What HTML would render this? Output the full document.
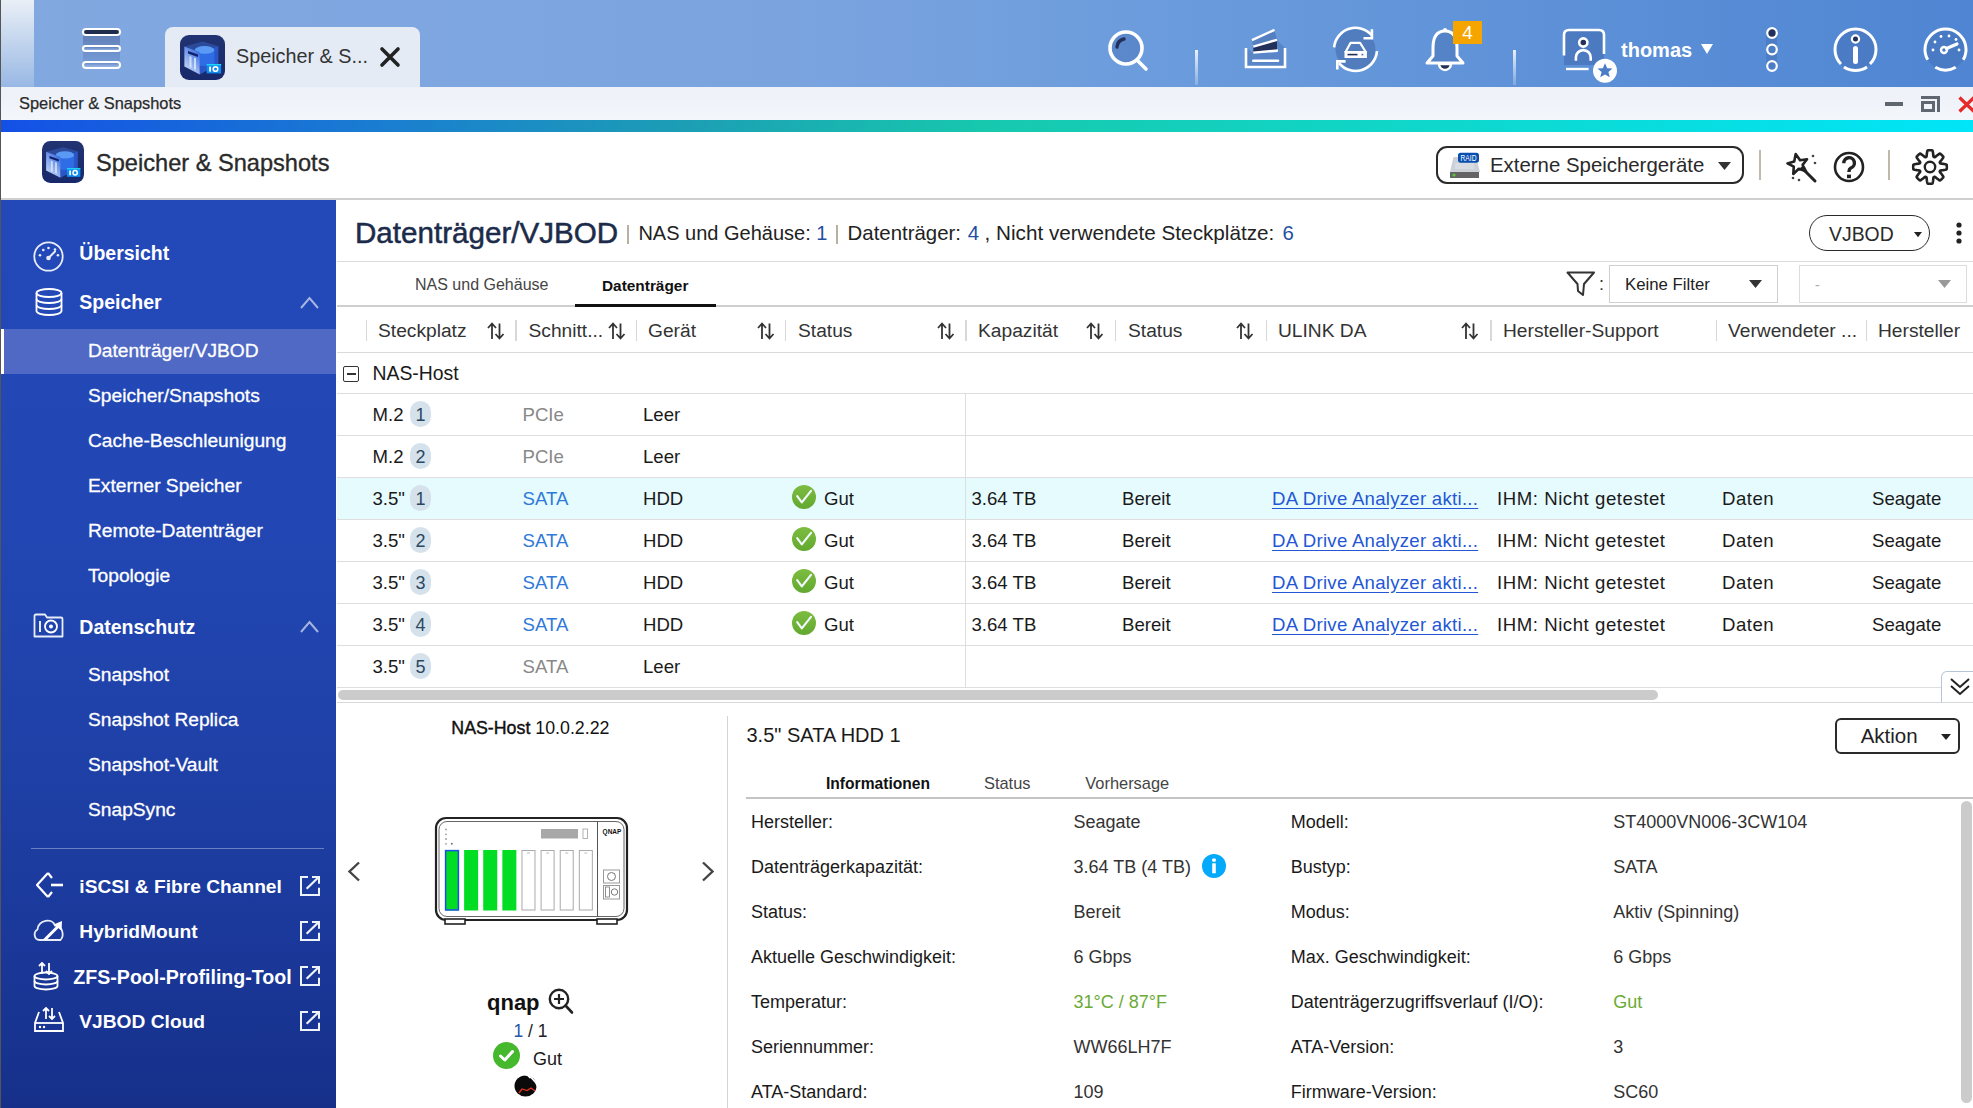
<!DOCTYPE html>
<html><head><meta charset="utf-8">
<style>
*{margin:0;padding:0;box-sizing:border-box}
html,body{width:1973px;height:1108px;overflow:hidden;background:#fff;font-family:"Liberation Sans",sans-serif;color:#222}
.a{position:absolute}
.t{position:absolute;white-space:nowrap;line-height:30px;height:30px}
svg{position:absolute;overflow:visible}
</style></head><body>

<div class="a" style="left:0px;top:0px;width:1973px;height:87px;background:linear-gradient(90deg,#82a8e0 0%,#7ba4df 40%,#6a9bdc 60%,#4f85d2 100%)"></div>
<div class="a" style="left:1px;top:0px;width:33px;height:87px;background:linear-gradient(180deg,#eaeff6 0%,#c9d9ef 40%,#98b8e4 100%)"></div>
<div class="a" style="left:83px;top:35px;width:37px;height:27px;background:linear-gradient(180deg,rgba(70,95,150,0.55),rgba(90,125,190,0.3))"></div>
<div class="a" style="left:82px;top:28px;width:39px;height:7.8px;border:2.4px solid #fff;border-radius:5px;background:#1e2d4d"></div>
<div class="a" style="left:82px;top:44.7px;width:39px;height:7.8px;border:2.4px solid #fff;border-radius:5px;background:linear-gradient(180deg,#5f80b8,#8fb0e2)"></div>
<div class="a" style="left:82px;top:61.4px;width:39px;height:7.8px;border:2.4px solid #fff;border-radius:5px;background:linear-gradient(180deg,#6a8cc8,#9ab8e8)"></div>
<div class="a" style="left:165px;top:27px;width:255px;height:60px;background:#e4ebf5;border-radius:8px 8px 0 0"></div>
<svg style="left:180px;top:35px" width="45" height="45" viewBox="0 0 45 45"><defs><linearGradient id="iga" x1="0" y1="0" x2="0" y2="1"><stop offset="0" stop-color="#223372"/><stop offset="1" stop-color="#17296a"/></linearGradient>
<linearGradient id="lfa" x1="0" y1="1" x2="0.6" y2="0"><stop offset="0" stop-color="#d8e6fa"/><stop offset="0.5" stop-color="#8fb0f0"/><stop offset="1" stop-color="#3f6fe0"/></linearGradient></defs>
<rect x="0" y="0" width="45" height="45" rx="9" fill="url(#iga)"/>
<path d="M4.4 11.5 L22.7 6.6 L38.4 11 L19.6 16.9 Z" fill="#2c4a9a"/>
<path d="M19.6 16.9 L38.4 11 L38.4 29.6 L19.8 39.4 Z" fill="#2a56c8"/>
<rect x="14.8" y="14.9" width="19.6" height="12.5" fill="#2f6de6"/>
<ellipse cx="24.6" cy="27.4" rx="9.8" ry="3.6" fill="#2f6de6"/>
<ellipse cx="24.6" cy="14.9" rx="9.8" ry="3.9" fill="#5a9af5"/>
<path d="M4.4 11.5 L19.6 16.9 L19.8 39.4 L4.4 31.5 Z" fill="url(#lfa)"/>
<path d="M8 16 L18 19.5 L18 22 L8 18.5 Z" fill="#10206a"/>
<path d="M9.5 21 L11.5 21.7 L11.5 33 L9.5 32 Z M14 22.5 L16 23.2 L16 35 L14 34 Z" fill="#eef4ff" opacity="0.7"/>
<rect x="26.7" y="29.1" width="14.4" height="9.3" fill="#0f8cf2"/>
<rect x="26.7" y="29.1" width="14.4" height="1.2" fill="#20e0f8"/>
<rect x="29.2" y="31.6" width="1.8" height="5" fill="#fff"/>
<circle cx="35.5" cy="34" r="2.3" fill="none" stroke="#fff" stroke-width="1.6"/></svg>
<div class="t" style="left:236px;top:40.84px;font-size:19.8px;color:#333;font-weight:normal;">Speicher &amp; S...</div>
<svg style="left:380px;top:47px" width="20" height="20" viewBox="0 0 20 20"><path d="M2 2 L18 18 M18 2 L2 18" stroke="#222" stroke-width="3.6" stroke-linecap="round"/></svg>
<svg style="left:1105px;top:27px" width="46" height="46" viewBox="0 0 46 46"><circle cx="21" cy="21" r="16" fill="rgba(60,100,170,0.35)" stroke="#fff" stroke-width="3.6"/><path d="M32 33 L41 42" stroke="#fff" stroke-width="3.6" stroke-linecap="round"/><path d="M12 20 A9 9 0 0 1 19 12" stroke="#22305a" stroke-width="3.4" fill="none" stroke-linecap="round"/></svg>
<div class="a" style="left:1195px;top:50px;width:3px;height:35px;background:linear-gradient(180deg,rgba(255,255,255,0.85),rgba(255,255,255,0.2))"></div>
<div class="a" style="left:1513px;top:50px;width:3px;height:35px;background:linear-gradient(180deg,rgba(255,255,255,0.85),rgba(255,255,255,0.2))"></div>
<svg style="left:1244px;top:28px" width="44" height="42" viewBox="0 0 44 42"><path d="M8 12.2 L30.5 1.9 L33 11.8 L9.3 18.6 Z" fill="rgba(40,70,130,0.3)"/><path d="M2 20 L2 39 L41 39 L41 20 L33 12 L33 25 L9.3 25 L2 20 Z" fill="rgba(40,70,130,0.22)"/><path d="M9.3 18.6 L33 11.6 L33 22.5 L9.3 24.4 Z" fill="#22305a"/><path d="M2 20 V39 H41 V20" stroke="#fff" stroke-width="2.6" fill="none"/><path d="M9.3 32.7 H34" stroke="#fff" stroke-width="2.6" stroke-linecap="round"/><path d="M9.3 18.6 L33 11.8" stroke="#fff" stroke-width="2.4"/><path d="M9.3 24.6 L34 22.5" stroke="#fff" stroke-width="2.4"/><path d="M8 12.2 L30.5 1.9" stroke="#fff" stroke-width="2.4"/></svg>
<svg style="left:1332px;top:26px" width="47" height="47" viewBox="0 0 47 47"><circle cx="23.5" cy="23.3" r="20" fill="rgba(40,70,130,0.3)"/><path d="M2.1 21.4 A21.5 21.5 0 0 1 40 9.5" stroke="#fff" stroke-width="2.6" fill="none"/><path d="M39.9 3.2 V12.3 H31.5" stroke="#fff" stroke-width="2.6" fill="none"/><path d="M45 25.2 A21.5 21.5 0 0 1 7 37.1" stroke="#fff" stroke-width="2.6" fill="none"/><path d="M5.3 43.6 V35.4 H13.6" stroke="#fff" stroke-width="2.6" fill="none"/><path d="M18.6 16.8 L28.1 16.8 L33.8 26 L13.6 26 Z" stroke="#fff" stroke-width="2.2" fill="none" stroke-linejoin="round"/><rect x="12.5" y="25" width="22.4" height="7" fill="#fff"/><rect x="15.5" y="27.8" width="10" height="1.6" fill="#22305a"/><rect x="29.5" y="27.8" width="1.8" height="1.6" fill="#4a70b0"/></svg>
<svg style="left:1424px;top:26px" width="42" height="46" viewBox="0 0 42 46"><path d="M21 5 C11 5 9 13 9 22 L9 30 L3 37 L39 37 L33 30 L33 22 C33 13 31 5 21 5 Z" fill="rgba(60,100,170,0.35)" stroke="#fff" stroke-width="3" stroke-linejoin="round"/><path d="M15 38 A6 6 0 0 0 27 38 Z" fill="#22305a" stroke="#fff" stroke-width="2.4"/><circle cx="21" cy="4" r="2" fill="#fff"/></svg>
<div class="a" style="left:1453px;top:21px;width:29px;height:23px;background:#f6a400"></div>
<div class="t" style="left:1453px;top:17.5px;width:29px;text-align:center;font-size:19px;color:#fff">4</div>
<svg style="left:1562px;top:28px" width="56" height="56" viewBox="0 0 56 56"><path d="M2 37 L2 7 Q2 2 7 2 L37 2 Q42 2 42 7 L42 37 Z" fill="rgba(45,80,150,0.33)"/><path d="M2 27.6 L2 7 Q2 2 7 2 L37 2 Q42 2 42 7 L42 26" fill="none" stroke="#fff" stroke-width="2.6"/><circle cx="21.3" cy="14.5" r="4.1" fill="#22305a" stroke="#fff" stroke-width="2.6"/><path d="M13.9 32.7 L13.9 29.5 A7.4 7.4 0 0 1 28.7 29.5 L28.7 32.7" stroke="#fff" stroke-width="2.6" fill="none"/><path d="M4 41 L26.6 41" stroke="#fff" stroke-width="2.4"/><circle cx="43" cy="42.7" r="12" fill="#fff"/><path d="M43 35.2 L45.2 40.2 L50.5 40.5 L46.4 44 L47.8 49.3 L43 46.4 L38.2 49.3 L39.6 44 L35.5 40.5 L40.8 40.2 Z" fill="#4a7cc8"/></svg>
<div class="t" style="left:1621px;top:34.67px;font-size:20px;color:#fff;font-weight:bold;">thomas</div>
<svg style="left:1701px;top:44px" width="12" height="10" viewBox="0 0 12 10"><path d="M0 0 L12 0 L6 10 Z" fill="#fff"/></svg>
<svg style="left:1764px;top:26px" width="16" height="48" viewBox="0 0 16 48"><rect x="2" y="5" width="11" height="38" rx="5" fill="rgba(60,100,170,0.35)"/><circle cx="8" cy="7" r="4.8" fill="#22305a" stroke="#fff" stroke-width="2.2"/><circle cx="8" cy="23.5" r="4.8" fill="none" stroke="#fff" stroke-width="2.2"/><circle cx="8" cy="40" r="4.8" fill="none" stroke="#fff" stroke-width="2.2"/></svg>
<svg style="left:1833px;top:27px" width="45" height="45" viewBox="0 0 45 45"><circle cx="22.5" cy="22.5" r="20.5" fill="rgba(60,100,170,0.35)"/><path d="M8 37 A20.5 20.5 0 1 1 37 37" stroke="#fff" stroke-width="3" fill="none"/><path d="M11 40 A20.5 20.5 0 0 0 34 40" stroke="#fff" stroke-width="3" fill="none"/><circle cx="22.5" cy="12" r="3.6" fill="#22305a" stroke="#fff" stroke-width="2.2"/><rect x="20" y="19" width="5" height="18" rx="2.5" fill="#fff"/></svg>
<svg style="left:1923px;top:27px" width="46" height="45" viewBox="0 0 46 45"><circle cx="22.5" cy="22.5" r="20.5" fill="rgba(60,100,170,0.35)"/><path d="M4.75 32.75 A20.5 20.5 0 1 1 40.25 32.75" stroke="#fff" stroke-width="3" fill="none"/><path d="M32.75 40.25 A20.5 20.5 0 0 1 12.25 40.25" stroke="#fff" stroke-width="3" fill="none"/><circle cx="21" cy="23" r="3" fill="none" stroke="#fff" stroke-width="2.4"/><path d="M23.5 21.5 L34 17" stroke="#fff" stroke-width="3.2" stroke-linecap="round"/><circle cx="10" cy="23" r="1.4" fill="#fff"/><circle cx="12" cy="15" r="1.4" fill="#fff"/><circle cx="18" cy="9.5" r="1.4" fill="#fff"/><circle cx="26" cy="9" r="1.4" fill="#fff"/><circle cx="33" cy="12.5" r="1.4" fill="#fff"/><circle cx="36" cy="23" r="1.4" fill="#fff"/></svg>
<div class="a" style="left:0px;top:0px;width:1px;height:1108px;background:#555"></div>
<div class="a" style="left:1px;top:87px;width:1972px;height:33px;background:linear-gradient(180deg,#edf1f8,#f3f6fb)"></div>
<div class="t" style="left:19px;top:87.92px;font-size:16.4px;color:#2a2a2a;font-weight:normal;-webkit-text-stroke:0.25px #2a2a2a">Speicher &amp; Snapshots</div>
<div class="a" style="left:1885px;top:102px;width:18px;height:4.4px;background:#5f6670"></div>
<div class="a" style="left:1921px;top:96.4px;width:18.6px;height:3px;background:#5f6670"></div>
<div class="a" style="left:1937px;top:96.4px;width:2.7px;height:16px;background:#5f6670"></div>
<div class="a" style="left:1921px;top:101px;width:14.2px;height:11.3px;border:3px solid #5f6670"></div>
<svg style="left:1958px;top:96px" width="18" height="17" viewBox="0 0 18 17"><path d="M1.5 1.5 L16 15.5 M16 1.5 L1.5 15.5" stroke="#e52a2a" stroke-width="3.2"/></svg>
<div class="a" style="left:1px;top:120px;width:1972px;height:12px;background:linear-gradient(90deg,#1450e6 0%,#1a7fd0 20%,#1c9fb4 35%,#17c8ae 50%,#10d6c8 70%,#00e5f8 100%)"></div>
<div class="a" style="left:1px;top:132px;width:1972px;height:66px;background:#fff"></div>
<div class="a" style="left:1px;top:198px;width:1972px;height:1.5px;background:#cfcfcf"></div>
<svg style="left:42px;top:141px" width="42" height="42" viewBox="0 0 45 45"><defs><linearGradient id="igb" x1="0" y1="0" x2="0" y2="1"><stop offset="0" stop-color="#223372"/><stop offset="1" stop-color="#17296a"/></linearGradient>
<linearGradient id="lfb" x1="0" y1="1" x2="0.6" y2="0"><stop offset="0" stop-color="#d8e6fa"/><stop offset="0.5" stop-color="#8fb0f0"/><stop offset="1" stop-color="#3f6fe0"/></linearGradient></defs>
<rect x="0" y="0" width="45" height="45" rx="9" fill="url(#igb)"/>
<path d="M4.4 11.5 L22.7 6.6 L38.4 11 L19.6 16.9 Z" fill="#2c4a9a"/>
<path d="M19.6 16.9 L38.4 11 L38.4 29.6 L19.8 39.4 Z" fill="#2a56c8"/>
<rect x="14.8" y="14.9" width="19.6" height="12.5" fill="#2f6de6"/>
<ellipse cx="24.6" cy="27.4" rx="9.8" ry="3.6" fill="#2f6de6"/>
<ellipse cx="24.6" cy="14.9" rx="9.8" ry="3.9" fill="#5a9af5"/>
<path d="M4.4 11.5 L19.6 16.9 L19.8 39.4 L4.4 31.5 Z" fill="url(#lfb)"/>
<path d="M8 16 L18 19.5 L18 22 L8 18.5 Z" fill="#10206a"/>
<path d="M9.5 21 L11.5 21.7 L11.5 33 L9.5 32 Z M14 22.5 L16 23.2 L16 35 L14 34 Z" fill="#eef4ff" opacity="0.7"/>
<rect x="26.7" y="29.1" width="14.4" height="9.3" fill="#0f8cf2"/>
<rect x="26.7" y="29.1" width="14.4" height="1.2" fill="#20e0f8"/>
<rect x="29.2" y="31.6" width="1.8" height="5" fill="#fff"/>
<circle cx="35.5" cy="34" r="2.3" fill="none" stroke="#fff" stroke-width="1.6"/></svg>
<div class="t" style="left:96px;top:147.82px;font-size:23.6px;color:#2a2a2a;font-weight:normal;-webkit-text-stroke:0.35px #2a2a2a">Speicher &amp; Snapshots</div>
<div class="a" style="left:1436px;top:146px;width:308px;height:38px;border:2px solid #2a2a2a;border-radius:11px"></div>
<svg style="left:1450px;top:152px" width="31" height="28" viewBox="0 0 31 28"><path d="M3.5 5 L26 5 L30 20 L0 20 Z" fill="#ccd2d8"/><rect x="5" y="11" width="19" height="6" fill="#d8dde2"/><rect x="0" y="20" width="29" height="6" fill="#646464"/><circle cx="4" cy="23" r="1.6" fill="#58c838"/><rect x="8" y="0.7" width="21" height="10" rx="2.6" fill="#0a4fb0"/><text x="18.5" y="8.6" font-size="8.2" font-family="Liberation Sans" fill="#fff" text-anchor="middle" textLength="16" lengthAdjust="spacingAndGlyphs">RAID</text></svg>
<div class="t" style="left:1490px;top:150.33px;font-size:20.4px;color:#2a2a2a;font-weight:normal;">Externe Speichergeräte</div>
<svg style="left:1718px;top:162px" width="13" height="8" viewBox="0 0 13 8"><path d="M0 0 L13 0 L6.5 8 Z" fill="#333"/></svg>
<div class="a" style="left:1759px;top:150px;width:2px;height:30px;background:#c0b8a8"></div>
<div class="a" style="left:1888px;top:150px;width:2px;height:30px;background:#c0b8a8"></div>
<svg style="left:1785px;top:151px" width="34" height="33" viewBox="0 0 34 33"><g transform="rotate(-12 12 14)"><path d="M13 3 L16 10 L23 10.5 L17.5 15 L19.5 22 L13 18 L6.5 22 L8.5 15 L3 10.5 L10 10 Z" fill="none" stroke="#222" stroke-width="2.6" stroke-linejoin="round"/></g><path d="M17 17 L30 30" stroke="#222" stroke-width="3" stroke-linecap="round"/><circle cx="28" cy="5" r="1.3" fill="#444"/><circle cx="30" cy="12" r="1.3" fill="#444"/><circle cx="8" cy="27" r="1.3" fill="#444"/><circle cx="14" cy="29" r="1.3" fill="#444"/></svg>
<svg style="left:1833px;top:151px" width="32" height="32" viewBox="0 0 32 32"><circle cx="16" cy="16" r="14" fill="none" stroke="#222" stroke-width="2.6"/><path d="M10.8 12.2 A5.3 5.3 0 1 1 17.8 17 Q16 18 16 20.5 L16 21" fill="none" stroke="#222" stroke-width="3.4" stroke-linecap="butt"/><rect x="14" y="23.6" width="4" height="3.6" fill="#222"/></svg>
<svg style="left:1912px;top:149px" width="36" height="36" viewBox="0 0 36 36"><polygon points="18.00,1.20 18.44,1.21 18.88,1.22 19.32,1.25 19.76,1.29 20.19,1.34 20.58,1.72 20.82,2.76 21.01,3.82 21.16,4.86 21.26,5.83 21.35,6.70 21.44,7.43 21.61,7.82 21.87,7.92 22.13,8.02 22.39,8.13 22.65,8.25 23.05,8.09 23.62,7.64 24.30,7.09 25.06,6.48 25.90,5.84 26.78,5.22 27.69,4.66 28.23,4.67 28.57,4.94 28.91,5.23 29.24,5.52 29.56,5.81 29.88,6.12 30.19,6.44 30.48,6.76 30.77,7.09 31.06,7.43 31.33,7.77 31.34,8.31 30.78,9.22 30.16,10.10 29.52,10.94 28.91,11.70 28.36,12.38 27.91,12.95 27.75,13.35 27.87,13.61 27.98,13.87 28.08,14.13 28.18,14.39 28.57,14.56 29.30,14.65 30.17,14.74 31.14,14.84 32.18,14.99 33.24,15.18 34.28,15.42 34.66,15.81 34.71,16.24 34.75,16.68 34.78,17.12 34.79,17.56 34.80,18.00 34.79,18.44 34.78,18.88 34.75,19.32 34.71,19.76 34.66,20.19 34.28,20.58 33.24,20.82 32.18,21.01 31.14,21.16 30.17,21.26 29.30,21.35 28.57,21.44 28.18,21.61 28.08,21.87 27.98,22.13 27.87,22.39 27.75,22.65 27.91,23.05 28.36,23.62 28.91,24.30 29.52,25.06 30.16,25.90 30.78,26.78 31.34,27.69 31.33,28.23 31.06,28.57 30.77,28.91 30.48,29.24 30.19,29.56 29.88,29.88 29.56,30.19 29.24,30.48 28.91,30.77 28.57,31.06 28.23,31.33 27.69,31.34 26.78,30.78 25.90,30.16 25.06,29.52 24.30,28.91 23.62,28.36 23.05,27.91 22.65,27.75 22.39,27.87 22.13,27.98 21.87,28.08 21.61,28.18 21.44,28.57 21.35,29.30 21.26,30.17 21.16,31.14 21.01,32.18 20.82,33.24 20.58,34.28 20.19,34.66 19.76,34.71 19.32,34.75 18.88,34.78 18.44,34.79 18.00,34.80 17.56,34.79 17.12,34.78 16.68,34.75 16.24,34.71 15.81,34.66 15.42,34.28 15.18,33.24 14.99,32.18 14.84,31.14 14.74,30.17 14.65,29.30 14.56,28.57 14.39,28.18 14.13,28.08 13.87,27.98 13.61,27.87 13.35,27.75 12.95,27.91 12.38,28.36 11.70,28.91 10.94,29.52 10.10,30.16 9.22,30.78 8.31,31.34 7.77,31.33 7.43,31.06 7.09,30.77 6.76,30.48 6.44,30.19 6.12,29.88 5.81,29.56 5.52,29.24 5.23,28.91 4.94,28.57 4.67,28.23 4.66,27.69 5.22,26.78 5.84,25.90 6.48,25.06 7.09,24.30 7.64,23.62 8.09,23.05 8.25,22.65 8.13,22.39 8.02,22.13 7.92,21.87 7.82,21.61 7.43,21.44 6.70,21.35 5.83,21.26 4.86,21.16 3.82,21.01 2.76,20.82 1.72,20.58 1.34,20.19 1.29,19.76 1.25,19.32 1.22,18.88 1.21,18.44 1.20,18.00 1.21,17.56 1.22,17.12 1.25,16.68 1.29,16.24 1.34,15.81 1.72,15.42 2.76,15.18 3.82,14.99 4.86,14.84 5.83,14.74 6.70,14.65 7.43,14.56 7.82,14.39 7.92,14.13 8.02,13.87 8.13,13.61 8.25,13.35 8.09,12.95 7.64,12.38 7.09,11.70 6.48,10.94 5.84,10.10 5.22,9.22 4.66,8.31 4.67,7.77 4.94,7.43 5.23,7.09 5.52,6.76 5.81,6.44 6.12,6.12 6.44,5.81 6.76,5.52 7.09,5.23 7.43,4.94 7.77,4.67 8.31,4.66 9.22,5.22 10.10,5.84 10.94,6.48 11.70,7.09 12.38,7.64 12.95,8.09 13.35,8.25 13.61,8.13 13.87,8.02 14.13,7.92 14.39,7.82 14.56,7.43 14.65,6.70 14.74,5.83 14.84,4.86 14.99,3.82 15.18,2.76 15.42,1.72 15.81,1.34 16.24,1.29 16.68,1.25 17.12,1.22 17.56,1.21" fill="none" stroke="#222" stroke-width="2.6" stroke-linejoin="round"/><circle cx="18" cy="18" r="5.2" fill="none" stroke="#222" stroke-width="2.4"/></svg>
<div class="a" style="left:1px;top:200px;width:335px;height:908px;background:linear-gradient(180deg,#2349b9 0%,#2247b4 35%,#1f41a8 60%,#1b399b 80%,#16308a 100%)"></div>
<div class="a" style="left:1px;top:329px;width:335px;height:45px;background:#5069c4"></div>
<div class="a" style="left:1px;top:329px;width:3px;height:45px;background:#fff"></div>
<div class="t" style="left:79.3px;top:238.24px;font-size:19.5px;color:#fff;font-weight:bold;">Übersicht</div>
<div class="t" style="left:79.3px;top:287.24px;font-size:19.5px;color:#fff;font-weight:bold;">Speicher</div>
<div class="t" style="left:88px;top:336.35px;font-size:19.2px;color:#fff;font-weight:normal;-webkit-text-stroke:0.3px #fff">Datenträger/VJBOD</div>
<div class="t" style="left:88px;top:381.35px;font-size:19.2px;color:#fff;font-weight:normal;-webkit-text-stroke:0.3px #fff">Speicher/Snapshots</div>
<div class="t" style="left:88px;top:426.35px;font-size:19.2px;color:#fff;font-weight:normal;-webkit-text-stroke:0.3px #fff">Cache-Beschleunigung</div>
<div class="t" style="left:88px;top:471.35px;font-size:19.2px;color:#fff;font-weight:normal;-webkit-text-stroke:0.3px #fff">Externer Speicher</div>
<div class="t" style="left:88px;top:516.35px;font-size:19.2px;color:#fff;font-weight:normal;-webkit-text-stroke:0.3px #fff">Remote-Datenträger</div>
<div class="t" style="left:88px;top:561.35px;font-size:19.2px;color:#fff;font-weight:normal;-webkit-text-stroke:0.3px #fff">Topologie</div>
<div class="t" style="left:79.3px;top:611.64px;font-size:19.5px;color:#fff;font-weight:bold;">Datenschutz</div>
<div class="t" style="left:88px;top:660.05px;font-size:19.2px;color:#fff;font-weight:normal;-webkit-text-stroke:0.3px #fff">Snapshot</div>
<div class="t" style="left:88px;top:705.05px;font-size:19.2px;color:#fff;font-weight:normal;-webkit-text-stroke:0.3px #fff">Snapshot Replica</div>
<div class="t" style="left:88px;top:750.05px;font-size:19.2px;color:#fff;font-weight:normal;-webkit-text-stroke:0.3px #fff">Snapshot-Vault</div>
<div class="t" style="left:88px;top:795.05px;font-size:19.2px;color:#fff;font-weight:normal;-webkit-text-stroke:0.3px #fff">SnapSync</div>
<div class="a" style="left:31px;top:848px;width:293px;height:1px;background:rgba(255,255,255,0.35)"></div>
<div class="t" style="left:79.3px;top:872.25px;font-size:19.2px;color:#fff;font-weight:bold;">iSCSI &amp; Fibre Channel</div>
<div class="t" style="left:79.3px;top:917.15px;font-size:19.2px;color:#fff;font-weight:bold;">HybridMount</div>
<div class="t" style="left:73.3px;top:962.21px;font-size:19.6px;color:#fff;font-weight:bold;">ZFS-Pool-Profiling-Tool</div>
<div class="t" style="left:79.3px;top:1007.05px;font-size:19.2px;color:#fff;font-weight:bold;">VJBOD Cloud</div>
<svg style="left:300px;top:296px" width="19" height="13" viewBox="0 0 19 13"><path d="M1 12 L9.5 2 L18 12" stroke="rgba(255,255,255,0.6)" stroke-width="2" fill="none"/></svg>
<svg style="left:300px;top:620px" width="19" height="13" viewBox="0 0 19 13"><path d="M1 12 L9.5 2 L18 12" stroke="rgba(255,255,255,0.6)" stroke-width="2" fill="none"/></svg>
<svg style="left:300px;top:876px" width="20" height="20" viewBox="0 0 20 20"><path d="M8 1 H1 V19 H19 V11.8" stroke="#eef2fb" stroke-width="2" fill="none"/><path d="M12 1 H19 V7.8" stroke="#eef2fb" stroke-width="2" fill="none"/><path d="M6.6 12.8 L18 1.8" stroke="#eef2fb" stroke-width="2.2" fill="none"/></svg>
<svg style="left:300px;top:921px" width="20" height="20" viewBox="0 0 20 20"><path d="M8 1 H1 V19 H19 V11.8" stroke="#eef2fb" stroke-width="2" fill="none"/><path d="M12 1 H19 V7.8" stroke="#eef2fb" stroke-width="2" fill="none"/><path d="M6.6 12.8 L18 1.8" stroke="#eef2fb" stroke-width="2.2" fill="none"/></svg>
<svg style="left:300px;top:966px" width="20" height="20" viewBox="0 0 20 20"><path d="M8 1 H1 V19 H19 V11.8" stroke="#eef2fb" stroke-width="2" fill="none"/><path d="M12 1 H19 V7.8" stroke="#eef2fb" stroke-width="2" fill="none"/><path d="M6.6 12.8 L18 1.8" stroke="#eef2fb" stroke-width="2.2" fill="none"/></svg>
<svg style="left:300px;top:1011px" width="20" height="20" viewBox="0 0 20 20"><path d="M8 1 H1 V19 H19 V11.8" stroke="#eef2fb" stroke-width="2" fill="none"/><path d="M12 1 H19 V7.8" stroke="#eef2fb" stroke-width="2" fill="none"/><path d="M6.6 12.8 L18 1.8" stroke="#eef2fb" stroke-width="2.2" fill="none"/></svg>
<svg style="left:33px;top:241px" width="31" height="31" viewBox="0 0 31 31"><circle cx="15.5" cy="15.5" r="14.2" fill="none" stroke="#e8edf8" stroke-width="1.8"/><path d="M15.5 17 L22 10.5" stroke="#e8edf8" stroke-width="2" stroke-linecap="round"/><circle cx="15.5" cy="17" r="2.3" fill="#e8edf8"/><circle cx="7" cy="14.3" r="1.3" fill="#e8edf8"/><circle cx="10.3" cy="9" r="1.3" fill="#e8edf8"/><circle cx="15.5" cy="7" r="1.3" fill="#e8edf8"/><circle cx="22" cy="8.6" r="1.3" fill="#e8edf8"/><circle cx="24.9" cy="14.3" r="1.3" fill="#e8edf8"/></svg>
<svg style="left:35px;top:288px" width="29" height="28" viewBox="0 0 29 28"><ellipse cx="14" cy="5" rx="12.5" ry="4" fill="none" stroke="#fff" stroke-width="1.8"/><path d="M1.5 5 L1.5 23 A12.5 4 0 0 0 26.5 23 L26.5 5" fill="none" stroke="#fff" stroke-width="1.8"/><path d="M1.5 11 A12.5 4 0 0 0 26.5 11 M1.5 17 A12.5 4 0 0 0 26.5 17" fill="none" stroke="#fff" stroke-width="1.8"/></svg>
<svg style="left:33px;top:613px" width="31" height="25" viewBox="0 0 31 25"><path d="M1.5 23.5 V3 Q1.5 1.5 3 1.5 H12 L14 4.5 H28 Q29.5 4.5 29.5 6 V23.5 Z" fill="none" stroke="#e8edf8" stroke-width="1.8" stroke-linejoin="round"/><path d="M7 8 L7 19" stroke="#fff" stroke-width="1.8"/><circle cx="18" cy="13.5" r="6" fill="none" stroke="#fff" stroke-width="1.8"/><circle cx="18" cy="13.5" r="2" fill="#fff"/></svg>
<svg style="left:35px;top:871px" width="29" height="28" viewBox="0 0 29 28"><path d="M13 2 L2 14 L13 26" stroke="#fff" stroke-width="2.2" fill="none" stroke-linejoin="round"/><path d="M13 2 L17 7 M13 26 L17 21" stroke="#fff" stroke-width="2.2"/><path d="M16 14 L28 14" stroke="#fff" stroke-width="2.6"/></svg>
<svg style="left:33px;top:918px" width="32" height="23" viewBox="0 0 32 23"><path d="M6.5 22 C1 22 0 14 4.5 11.5 C5.5 2 19 -0.5 22 7.5 C29 7 32 17 27.5 22 Z" fill="none" stroke="#e8edf8" stroke-width="1.8"/><path d="M11.5 22 L25 8.5" stroke="#fff" stroke-width="3"/><path d="M20.5 6.5 L29 3 L28.5 12.5 Z" fill="#fff"/></svg>
<svg style="left:33px;top:962px" width="26" height="29" viewBox="0 0 26 29"><ellipse cx="13" cy="14" rx="11.5" ry="3.5" fill="none" stroke="#fff" stroke-width="1.8"/><path d="M1.5 14 L1.5 24 A11.5 3.5 0 0 0 24.5 24 L24.5 14" fill="none" stroke="#fff" stroke-width="1.8"/><path d="M1.5 19 A11.5 3.5 0 0 0 24.5 19" fill="none" stroke="#fff" stroke-width="1.8"/><path d="M9 12 L9 1 M6 4 L9 1 L12 4 M16 1 L16 12 M13 9 L16 12 L19 9" stroke="#fff" stroke-width="1.8" fill="none"/></svg>
<svg style="left:33px;top:1006px" width="32" height="27" viewBox="0 0 32 27"><path d="M6 6 L2 17 L2 25 L30 25 L30 17 L26 6" fill="none" stroke="#fff" stroke-width="1.8"/><path d="M2 17 L30 17" stroke="#fff" stroke-width="1.8"/><circle cx="7" cy="21" r="1.2" fill="#fff"/><circle cx="11" cy="21" r="1.2" fill="#fff"/><path d="M13 13 L13 2 M10 5 L13 2 L16 5 M19 2 L19 13 M16 10 L19 13 L22 10" stroke="#fff" stroke-width="1.8" fill="none"/></svg>
<div class="t" style="left:355px;top:218.04px;font-size:29.6px;color:#1c2b4a;font-weight:normal;-webkit-text-stroke:0.5px #1c2b4a">Datenträger/VJBOD</div>
<div class="a" style="left:627px;top:225px;width:2px;height:19px;background:#b8b0a0"></div>
<div class="t" style="left:638.4px;top:217.87px;font-size:20px;color:#222;font-weight:normal;">NAS und Gehäuse: <span style="color:#1f4fa0">1</span></div>
<div class="a" style="left:836px;top:225px;width:2px;height:19px;background:#b8b0a0"></div>
<div class="t" style="left:847.6px;top:217.73px;font-size:20.4px;color:#222;font-weight:normal;">Datenträger:</div>
<div class="t" style="left:967.8px;top:217.73px;font-size:20.4px;color:#1f4fa0;font-weight:normal;">4</div>
<div class="t" style="left:984.5px;top:217.63px;font-size:20.7px;color:#222;font-weight:normal;">, Nicht verwendete Steckplätze:</div>
<div class="t" style="left:1282.5px;top:217.73px;font-size:20.4px;color:#1f4fa0;font-weight:normal;">6</div>
<div class="a" style="left:1809px;top:215px;width:121px;height:36px;border:1.7px solid #2a2a2a;border-radius:18px"></div>
<div class="t" style="left:1829px;top:219.28px;font-size:19.4px;color:#2a2a2a;font-weight:normal;">VJBOD</div>
<svg style="left:1913.5px;top:231.5px" width="8" height="5.2" viewBox="0 0 8 5.2"><path d="M0 0 L8 0 L4 5.2 Z" fill="#222"/></svg>
<svg style="left:1955px;top:222px" width="8" height="22" viewBox="0 0 8 22"><circle cx="4" cy="3" r="2.6" fill="#222"/><circle cx="4" cy="11" r="2.6" fill="#222"/><circle cx="4" cy="19" r="2.6" fill="#222"/></svg>
<div class="a" style="left:337px;top:261px;width:1636px;height:1px;background:#dcdcdc"></div>
<div class="t" style="left:415px;top:270.36px;font-size:16px;color:#444;font-weight:normal;">NAS und Gehäuse</div>
<div class="t" style="left:602px;top:270.56px;font-size:15.4px;color:#111;font-weight:bold;">Datenträger</div>
<div class="a" style="left:337px;top:305px;width:1636px;height:2px;background:#cfcfcf"></div>
<div class="a" style="left:575px;top:304px;width:141px;height:3px;background:#111"></div>
<svg style="left:1566px;top:271px" width="30" height="25" viewBox="0 0 30 25"><path d="M1.5 1.5 L28 1.5 L18 13 L17 24 L12 20 L11.5 13 Z" fill="none" stroke="#333" stroke-width="2" stroke-linejoin="round"/></svg>
<div class="t" style="left:1599px;top:268.76px;font-size:18px;color:#333;font-weight:normal;">:</div>
<div class="a" style="left:1609px;top:265px;width:169px;height:38px;border:1px solid #cfcfcf;background:#fff"></div>
<div class="t" style="left:1625px;top:269.68px;font-size:16.8px;color:#222;font-weight:normal;">Keine Filter</div>
<svg style="left:1749px;top:280px" width="13" height="8" viewBox="0 0 13 8"><path d="M0 0 L13 0 L6.5 8 Z" fill="#333"/></svg>
<div class="a" style="left:1799px;top:265px;width:168px;height:38px;border:1px solid #dcdcdc;background:#fff"></div>
<div class="t" style="left:1815px;top:270.15px;font-size:14px;color:#aaa;font-weight:normal;">-</div>
<svg style="left:1938px;top:280px" width="13" height="8" viewBox="0 0 13 8"><path d="M0 0 L13 0 L6.5 8 Z" fill="#999"/></svg>
<div class="a" style="left:365.6px;top:319.5px;width:1.2px;height:21px;background:#d8d8d8"></div>
<div class="a" style="left:515.4px;top:319.5px;width:1.2px;height:21px;background:#d8d8d8"></div>
<div class="a" style="left:635.6px;top:319.5px;width:1.2px;height:21px;background:#d8d8d8"></div>
<div class="a" style="left:785.3px;top:319.5px;width:1.2px;height:21px;background:#d8d8d8"></div>
<div class="a" style="left:965.4px;top:319.5px;width:1.2px;height:21px;background:#d8d8d8"></div>
<div class="a" style="left:1115px;top:319.5px;width:1.2px;height:21px;background:#d8d8d8"></div>
<div class="a" style="left:1266px;top:319.5px;width:1.2px;height:21px;background:#d8d8d8"></div>
<div class="a" style="left:1490.4px;top:319.5px;width:1.2px;height:21px;background:#d8d8d8"></div>
<div class="a" style="left:1715.8px;top:319.5px;width:1.2px;height:21px;background:#d8d8d8"></div>
<div class="a" style="left:1865.7px;top:319.5px;width:1.2px;height:21px;background:#d8d8d8"></div>
<div class="t" style="left:378px;top:315.85px;font-size:19.2px;color:#333;font-weight:normal;">Steckplatz</div>
<div class="t" style="left:528.5px;top:315.85px;font-size:19.2px;color:#333;font-weight:normal;">Schnitt...</div>
<div class="t" style="left:648px;top:315.85px;font-size:19.2px;color:#333;font-weight:normal;">Gerät</div>
<div class="t" style="left:798px;top:315.85px;font-size:19.2px;color:#333;font-weight:normal;">Status</div>
<div class="t" style="left:978px;top:315.85px;font-size:19.2px;color:#333;font-weight:normal;">Kapazität</div>
<div class="t" style="left:1128px;top:315.85px;font-size:19.2px;color:#333;font-weight:normal;">Status</div>
<div class="t" style="left:1278px;top:315.85px;font-size:19.2px;color:#333;font-weight:normal;">ULINK DA</div>
<div class="t" style="left:1503px;top:315.85px;font-size:19.2px;color:#333;font-weight:normal;">Hersteller-Support</div>
<div class="t" style="left:1728px;top:315.85px;font-size:19.2px;color:#333;font-weight:normal;">Verwendeter ...</div>
<div class="t" style="left:1878px;top:315.85px;font-size:19.2px;color:#333;font-weight:normal;">Hersteller</div>
<svg style="left:487px;top:322px" width="18" height="18" viewBox="0 0 18 18"><path d="M5 17 L5 2 M1 6 L5 1.5 L9 6" stroke="#333" stroke-width="1.8" fill="none"/><path d="M12.5 1.5 L12.5 16.5 M8.5 12 L12.5 16.5 L16.5 12" stroke="#333" stroke-width="1.8" fill="none"/></svg>
<svg style="left:608px;top:322px" width="18" height="18" viewBox="0 0 18 18"><path d="M5 17 L5 2 M1 6 L5 1.5 L9 6" stroke="#333" stroke-width="1.8" fill="none"/><path d="M12.5 1.5 L12.5 16.5 M8.5 12 L12.5 16.5 L16.5 12" stroke="#333" stroke-width="1.8" fill="none"/></svg>
<svg style="left:757px;top:322px" width="18" height="18" viewBox="0 0 18 18"><path d="M5 17 L5 2 M1 6 L5 1.5 L9 6" stroke="#333" stroke-width="1.8" fill="none"/><path d="M12.5 1.5 L12.5 16.5 M8.5 12 L12.5 16.5 L16.5 12" stroke="#333" stroke-width="1.8" fill="none"/></svg>
<svg style="left:937px;top:322px" width="18" height="18" viewBox="0 0 18 18"><path d="M5 17 L5 2 M1 6 L5 1.5 L9 6" stroke="#333" stroke-width="1.8" fill="none"/><path d="M12.5 1.5 L12.5 16.5 M8.5 12 L12.5 16.5 L16.5 12" stroke="#333" stroke-width="1.8" fill="none"/></svg>
<svg style="left:1086px;top:322px" width="18" height="18" viewBox="0 0 18 18"><path d="M5 17 L5 2 M1 6 L5 1.5 L9 6" stroke="#333" stroke-width="1.8" fill="none"/><path d="M12.5 1.5 L12.5 16.5 M8.5 12 L12.5 16.5 L16.5 12" stroke="#333" stroke-width="1.8" fill="none"/></svg>
<svg style="left:1236px;top:322px" width="18" height="18" viewBox="0 0 18 18"><path d="M5 17 L5 2 M1 6 L5 1.5 L9 6" stroke="#333" stroke-width="1.8" fill="none"/><path d="M12.5 1.5 L12.5 16.5 M8.5 12 L12.5 16.5 L16.5 12" stroke="#333" stroke-width="1.8" fill="none"/></svg>
<svg style="left:1461px;top:322px" width="18" height="18" viewBox="0 0 18 18"><path d="M5 17 L5 2 M1 6 L5 1.5 L9 6" stroke="#333" stroke-width="1.8" fill="none"/><path d="M12.5 1.5 L12.5 16.5 M8.5 12 L12.5 16.5 L16.5 12" stroke="#333" stroke-width="1.8" fill="none"/></svg>
<div class="a" style="left:337px;top:352px;width:1636px;height:1px;background:#dadada"></div>
<div class="a" style="left:337px;top:478px;width:1636px;height:41px;background:#e6fbfd"></div>
<div class="a" style="left:337px;top:393px;width:1636px;height:1px;background:#dedede"></div>
<div class="a" style="left:337px;top:435px;width:1636px;height:1px;background:#dedede"></div>
<div class="a" style="left:337px;top:477px;width:1636px;height:1px;background:#dedede"></div>
<div class="a" style="left:337px;top:519px;width:1636px;height:1px;background:#dedede"></div>
<div class="a" style="left:337px;top:561px;width:1636px;height:1px;background:#dedede"></div>
<div class="a" style="left:337px;top:603px;width:1636px;height:1px;background:#dedede"></div>
<div class="a" style="left:337px;top:645px;width:1636px;height:1px;background:#dedede"></div>
<div class="a" style="left:337px;top:687px;width:1636px;height:1px;background:#dedede"></div>
<div class="a" style="left:965px;top:393px;width:1px;height:294px;background:#dedede"></div>
<div class="a" style="left:343px;top:365.5px;width:16px;height:16px;border:1.4px solid #333;border-radius:2px"></div>
<div class="a" style="left:346.5px;top:373px;width:9px;height:1.6px;background:#333"></div>
<div class="t" style="left:372.5px;top:358.28px;font-size:19.4px;color:#1a1a1a;font-weight:normal;">NAS-Host</div>
<div class="t" style="left:372.5px;top:399.56px;font-size:18.6px;color:#1a1a1a;font-weight:normal;">M.2</div>
<div class="a" style="left:410px;top:401.0px;width:21px;height:26px;background:#d5e2ec;border-radius:11px"></div>
<div class="t" style="left:410px;top:400.00px;width:21px;text-align:center;font-size:18px;color:#2a4862">1</div>
<div class="t" style="left:522.5px;top:399.56px;font-size:18.6px;color:#888;font-weight:normal;">PCIe</div>
<div class="t" style="left:643px;top:399.56px;font-size:18.6px;color:#1a1a1a;font-weight:normal;">Leer</div>
<div class="t" style="left:372.5px;top:441.56px;font-size:18.6px;color:#1a1a1a;font-weight:normal;">M.2</div>
<div class="a" style="left:410px;top:443.0px;width:21px;height:26px;background:#d5e2ec;border-radius:11px"></div>
<div class="t" style="left:410px;top:442.00px;width:21px;text-align:center;font-size:18px;color:#2a4862">2</div>
<div class="t" style="left:522.5px;top:441.56px;font-size:18.6px;color:#888;font-weight:normal;">PCIe</div>
<div class="t" style="left:643px;top:441.56px;font-size:18.6px;color:#1a1a1a;font-weight:normal;">Leer</div>
<div class="t" style="left:372.5px;top:483.56px;font-size:18.6px;color:#1a1a1a;font-weight:normal;">3.5"</div>
<div class="a" style="left:410px;top:485.0px;width:21px;height:26px;background:#d5e2ec;border-radius:11px"></div>
<div class="t" style="left:410px;top:484.00px;width:21px;text-align:center;font-size:18px;color:#2a4862">1</div>
<div class="t" style="left:522.5px;top:483.56px;font-size:18.6px;color:#2f7ad8;font-weight:normal;">SATA</div>
<div class="t" style="left:643px;top:483.56px;font-size:18.6px;color:#1a1a1a;font-weight:normal;">HDD</div>
<svg style="left:792px;top:485.0px" width="24" height="24" viewBox="0 0 24 24"><defs><linearGradient id="ckg" x1="0" y1="0" x2="0" y2="1"><stop offset="0" stop-color="#7dbd40"/><stop offset="1" stop-color="#62a92f"/></linearGradient></defs><circle cx="12" cy="12" r="12" fill="url(#ckg)"/><path d="M5.2 11.2 L9.8 17.3 L19 5.8" stroke="#f4fbff" stroke-width="2.1" fill="none" stroke-linecap="round" stroke-linejoin="round"/></svg>
<div class="t" style="left:824px;top:483.56px;font-size:18.6px;color:#1a1a1a;font-weight:normal;">Gut</div>
<div class="t" style="left:971.5px;top:483.56px;font-size:18.6px;color:#1a1a1a;font-weight:normal;">3.64 TB</div>
<div class="t" style="left:1122px;top:483.56px;font-size:18.6px;color:#1a1a1a;font-weight:normal;">Bereit</div>
<div class="t" style="left:1272px;top:483.56px;font-size:18.6px;color:#2457d6;font-weight:normal;text-decoration:underline;text-underline-offset:3px;letter-spacing:0.27px">DA Drive Analyzer akti...</div>
<div class="t" style="left:1497px;top:483.56px;font-size:18.6px;color:#1a1a1a;font-weight:normal;letter-spacing:0.55px">IHM: Nicht getestet</div>
<div class="t" style="left:1722px;top:483.56px;font-size:18.6px;color:#1a1a1a;font-weight:normal;letter-spacing:0.5px">Daten</div>
<div class="t" style="left:1872px;top:483.56px;font-size:18.6px;color:#1a1a1a;font-weight:normal;">Seagate</div>
<div class="t" style="left:372.5px;top:525.56px;font-size:18.6px;color:#1a1a1a;font-weight:normal;">3.5"</div>
<div class="a" style="left:410px;top:527.0px;width:21px;height:26px;background:#d5e2ec;border-radius:11px"></div>
<div class="t" style="left:410px;top:526.00px;width:21px;text-align:center;font-size:18px;color:#2a4862">2</div>
<div class="t" style="left:522.5px;top:525.56px;font-size:18.6px;color:#2f7ad8;font-weight:normal;">SATA</div>
<div class="t" style="left:643px;top:525.56px;font-size:18.6px;color:#1a1a1a;font-weight:normal;">HDD</div>
<svg style="left:792px;top:527.0px" width="24" height="24" viewBox="0 0 24 24"><defs><linearGradient id="ckg" x1="0" y1="0" x2="0" y2="1"><stop offset="0" stop-color="#7dbd40"/><stop offset="1" stop-color="#62a92f"/></linearGradient></defs><circle cx="12" cy="12" r="12" fill="url(#ckg)"/><path d="M5.2 11.2 L9.8 17.3 L19 5.8" stroke="#f4fbff" stroke-width="2.1" fill="none" stroke-linecap="round" stroke-linejoin="round"/></svg>
<div class="t" style="left:824px;top:525.56px;font-size:18.6px;color:#1a1a1a;font-weight:normal;">Gut</div>
<div class="t" style="left:971.5px;top:525.56px;font-size:18.6px;color:#1a1a1a;font-weight:normal;">3.64 TB</div>
<div class="t" style="left:1122px;top:525.56px;font-size:18.6px;color:#1a1a1a;font-weight:normal;">Bereit</div>
<div class="t" style="left:1272px;top:525.56px;font-size:18.6px;color:#2457d6;font-weight:normal;text-decoration:underline;text-underline-offset:3px;letter-spacing:0.27px">DA Drive Analyzer akti...</div>
<div class="t" style="left:1497px;top:525.56px;font-size:18.6px;color:#1a1a1a;font-weight:normal;letter-spacing:0.55px">IHM: Nicht getestet</div>
<div class="t" style="left:1722px;top:525.56px;font-size:18.6px;color:#1a1a1a;font-weight:normal;letter-spacing:0.5px">Daten</div>
<div class="t" style="left:1872px;top:525.56px;font-size:18.6px;color:#1a1a1a;font-weight:normal;">Seagate</div>
<div class="t" style="left:372.5px;top:567.56px;font-size:18.6px;color:#1a1a1a;font-weight:normal;">3.5"</div>
<div class="a" style="left:410px;top:569.0px;width:21px;height:26px;background:#d5e2ec;border-radius:11px"></div>
<div class="t" style="left:410px;top:568.00px;width:21px;text-align:center;font-size:18px;color:#2a4862">3</div>
<div class="t" style="left:522.5px;top:567.56px;font-size:18.6px;color:#2f7ad8;font-weight:normal;">SATA</div>
<div class="t" style="left:643px;top:567.56px;font-size:18.6px;color:#1a1a1a;font-weight:normal;">HDD</div>
<svg style="left:792px;top:569.0px" width="24" height="24" viewBox="0 0 24 24"><defs><linearGradient id="ckg" x1="0" y1="0" x2="0" y2="1"><stop offset="0" stop-color="#7dbd40"/><stop offset="1" stop-color="#62a92f"/></linearGradient></defs><circle cx="12" cy="12" r="12" fill="url(#ckg)"/><path d="M5.2 11.2 L9.8 17.3 L19 5.8" stroke="#f4fbff" stroke-width="2.1" fill="none" stroke-linecap="round" stroke-linejoin="round"/></svg>
<div class="t" style="left:824px;top:567.56px;font-size:18.6px;color:#1a1a1a;font-weight:normal;">Gut</div>
<div class="t" style="left:971.5px;top:567.56px;font-size:18.6px;color:#1a1a1a;font-weight:normal;">3.64 TB</div>
<div class="t" style="left:1122px;top:567.56px;font-size:18.6px;color:#1a1a1a;font-weight:normal;">Bereit</div>
<div class="t" style="left:1272px;top:567.56px;font-size:18.6px;color:#2457d6;font-weight:normal;text-decoration:underline;text-underline-offset:3px;letter-spacing:0.27px">DA Drive Analyzer akti...</div>
<div class="t" style="left:1497px;top:567.56px;font-size:18.6px;color:#1a1a1a;font-weight:normal;letter-spacing:0.55px">IHM: Nicht getestet</div>
<div class="t" style="left:1722px;top:567.56px;font-size:18.6px;color:#1a1a1a;font-weight:normal;letter-spacing:0.5px">Daten</div>
<div class="t" style="left:1872px;top:567.56px;font-size:18.6px;color:#1a1a1a;font-weight:normal;">Seagate</div>
<div class="t" style="left:372.5px;top:609.56px;font-size:18.6px;color:#1a1a1a;font-weight:normal;">3.5"</div>
<div class="a" style="left:410px;top:611.0px;width:21px;height:26px;background:#d5e2ec;border-radius:11px"></div>
<div class="t" style="left:410px;top:610.00px;width:21px;text-align:center;font-size:18px;color:#2a4862">4</div>
<div class="t" style="left:522.5px;top:609.56px;font-size:18.6px;color:#2f7ad8;font-weight:normal;">SATA</div>
<div class="t" style="left:643px;top:609.56px;font-size:18.6px;color:#1a1a1a;font-weight:normal;">HDD</div>
<svg style="left:792px;top:611.0px" width="24" height="24" viewBox="0 0 24 24"><defs><linearGradient id="ckg" x1="0" y1="0" x2="0" y2="1"><stop offset="0" stop-color="#7dbd40"/><stop offset="1" stop-color="#62a92f"/></linearGradient></defs><circle cx="12" cy="12" r="12" fill="url(#ckg)"/><path d="M5.2 11.2 L9.8 17.3 L19 5.8" stroke="#f4fbff" stroke-width="2.1" fill="none" stroke-linecap="round" stroke-linejoin="round"/></svg>
<div class="t" style="left:824px;top:609.56px;font-size:18.6px;color:#1a1a1a;font-weight:normal;">Gut</div>
<div class="t" style="left:971.5px;top:609.56px;font-size:18.6px;color:#1a1a1a;font-weight:normal;">3.64 TB</div>
<div class="t" style="left:1122px;top:609.56px;font-size:18.6px;color:#1a1a1a;font-weight:normal;">Bereit</div>
<div class="t" style="left:1272px;top:609.56px;font-size:18.6px;color:#2457d6;font-weight:normal;text-decoration:underline;text-underline-offset:3px;letter-spacing:0.27px">DA Drive Analyzer akti...</div>
<div class="t" style="left:1497px;top:609.56px;font-size:18.6px;color:#1a1a1a;font-weight:normal;letter-spacing:0.55px">IHM: Nicht getestet</div>
<div class="t" style="left:1722px;top:609.56px;font-size:18.6px;color:#1a1a1a;font-weight:normal;letter-spacing:0.5px">Daten</div>
<div class="t" style="left:1872px;top:609.56px;font-size:18.6px;color:#1a1a1a;font-weight:normal;">Seagate</div>
<div class="t" style="left:372.5px;top:651.56px;font-size:18.6px;color:#1a1a1a;font-weight:normal;">3.5"</div>
<div class="a" style="left:410px;top:653.0px;width:21px;height:26px;background:#d5e2ec;border-radius:11px"></div>
<div class="t" style="left:410px;top:652.00px;width:21px;text-align:center;font-size:18px;color:#2a4862">5</div>
<div class="t" style="left:522.5px;top:651.56px;font-size:18.6px;color:#888;font-weight:normal;">SATA</div>
<div class="t" style="left:643px;top:651.56px;font-size:18.6px;color:#1a1a1a;font-weight:normal;">Leer</div>
<div class="a" style="left:338px;top:690px;width:1320px;height:10px;background:#cbcbcb;border-radius:5px"></div>
<div class="a" style="left:337px;top:702px;width:1636px;height:1px;background:#d8d8d8"></div>
<div class="a" style="left:1941px;top:671px;width:40px;height:31px;border:1px solid #b8c4d8;border-bottom:none;border-radius:6px 0 0 0;background:#fff"></div>
<svg style="left:1949px;top:677px" width="22" height="20" viewBox="0 0 22 20"><path d="M2 2 L11 10 L20 2 M2 9 L11 17 L20 9" stroke="#222" stroke-width="2" fill="none"/></svg>
<div class="t" style="left:451.3px;top:713.03px;font-size:17.8px;color:#111;font-weight:normal;"><span style="-webkit-text-stroke:0.4px #111">NAS-Host</span> 10.0.2.22</div>
<div class="a" style="left:727px;top:716px;width:1.2px;height:392px;background:#d4d4d4"></div>
<svg style="left:347px;top:861px" width="14" height="21" viewBox="0 0 14 21"><path d="M12 1.5 L2.5 10.5 L12 19.5" stroke="#444" stroke-width="2.4" fill="none"/></svg>
<svg style="left:701px;top:861px" width="14" height="21" viewBox="0 0 14 21"><path d="M2 1.5 L11.5 10.5 L2 19.5" stroke="#444" stroke-width="2.4" fill="none"/></svg>
<svg style="left:434.5px;top:817px" width="195" height="110" viewBox="0 0 195 110"><rect x="1" y="1" width="191" height="102" rx="10" fill="#fff" stroke="#222" stroke-width="2.2"/><rect x="4" y="4.5" width="185" height="95" rx="8" fill="none" stroke="#555" stroke-width="0.9"/><path d="M162.5 4.5 L162.5 99.5" stroke="#555" stroke-width="1"/><rect x="10" y="102" width="20" height="5" fill="#fff" stroke="#222" stroke-width="1.6"/><rect x="162" y="102" width="20" height="5" fill="#fff" stroke="#222" stroke-width="1.6"/><rect x="106" y="12" width="37" height="9.5" fill="#a8a8a8"/><rect x="148" y="12" width="4.5" height="9.5" fill="none" stroke="#aaa" stroke-width="0.9"/><rect x="168.5" y="53" width="16" height="13" fill="none" stroke="#999" stroke-width="1"/><circle cx="176.5" cy="59.5" r="4" fill="none" stroke="#777" stroke-width="1"/><rect x="168.5" y="68.5" width="16" height="13.5" fill="none" stroke="#999" stroke-width="1"/><rect x="170.5" y="70" width="4" height="10" fill="none" stroke="#777" stroke-width="0.8"/><circle cx="179.5" cy="75" r="3.2" fill="none" stroke="#777" stroke-width="1"/><text x="177" y="16.5" font-size="6.5" font-family="Liberation Sans" font-weight="bold" fill="#111" text-anchor="middle">QNAP</text><circle cx="11" cy="12.5" r="0.9" fill="#999"/><circle cx="11" cy="17.3" r="0.9" fill="#999"/><circle cx="11" cy="22" r="0.9" fill="#999"/><circle cx="11" cy="26.8" r="0.9" fill="#999"/><circle cx="16.8" cy="26.8" r="1" fill="#777"/><rect x="10.00" y="33" width="14" height="60.5" fill="#00dd22"/><rect x="10.60" y="33.6" width="12.8" height="59.3" fill="none" stroke="#1a50e8" stroke-width="1.5"/><rect x="29.12" y="33" width="14" height="60.5" fill="#00dd22"/><rect x="48.24" y="33" width="14" height="60.5" fill="#00dd22"/><rect x="67.36" y="33" width="14" height="60.5" fill="#00dd22"/><rect x="86.98" y="33.5" width="13" height="59.5" fill="#fff" stroke="#aaa" stroke-width="1"/><rect x="91.98" y="35.5" width="3" height="1" fill="#bbb"/><rect x="106.10" y="33.5" width="13" height="59.5" fill="#fff" stroke="#aaa" stroke-width="1"/><rect x="111.10" y="35.5" width="3" height="1" fill="#bbb"/><rect x="125.22" y="33.5" width="13" height="59.5" fill="#fff" stroke="#aaa" stroke-width="1"/><rect x="130.22" y="35.5" width="3" height="1" fill="#bbb"/><rect x="144.34" y="33.5" width="13" height="59.5" fill="#fff" stroke="#aaa" stroke-width="1"/><rect x="149.34" y="35.5" width="3" height="1" fill="#bbb"/></svg>
<div class="t" style="left:487px;top:988.38px;font-size:22px;color:#111;font-weight:bold;">qnap</div>
<svg style="left:548px;top:988px" width="26" height="27" viewBox="0 0 26 27"><circle cx="11" cy="11" r="9.2" fill="none" stroke="#222" stroke-width="2.4"/><path d="M17.5 17.5 L24 24.5" stroke="#222" stroke-width="2.6" stroke-linecap="round"/><path d="M11 6 L11 16 M6 11 L16 11" stroke="#222" stroke-width="2.2"/></svg>
<div class="t" style="left:513.5px;top:1015.94px;font-size:17.5px;color:#222;font-weight:normal;"><span style="color:#2457a8">1</span> / 1</div>
<svg style="left:493px;top:1042px" width="27" height="27" viewBox="0 0 27 27"><circle cx="13.5" cy="13.5" r="13.5" fill="#45b82d"/><path d="M7.5 14 L11.8 18 L19.5 9.5" stroke="#fff" stroke-width="3" fill="none" stroke-linecap="round" stroke-linejoin="round"/></svg>
<div class="t" style="left:533px;top:1043.76px;font-size:18px;color:#1a1a1a;font-weight:normal;">Gut</div>
<svg style="left:513px;top:1072px" width="28" height="26" viewBox="0 0 28 26"><ellipse cx="12.5" cy="14" rx="11" ry="10.5" fill="#0a0a0a"/><path d="M11 2 Q21 5 25 15" stroke="#fff" stroke-width="1.8" fill="none"/><path d="M15 3 L17 6" stroke="#fff" stroke-width="1.5"/><path d="M6 21 L9 17 L14 18.5 L18 16 L22 19" stroke="#e8331c" stroke-width="1.3" fill="none"/></svg>
<div class="t" style="left:746.5px;top:720.37px;font-size:20px;color:#1a1a1a;font-weight:normal;">3.5" SATA HDD 1</div>
<div class="a" style="left:1835px;top:718px;width:125px;height:36px;border:2px solid #2a2a2a;border-radius:6px"></div>
<div class="t" style="left:1860.7px;top:721.40px;font-size:20.5px;color:#222;font-weight:normal;">Aktion</div>
<svg style="left:1941px;top:734px" width="10" height="6" viewBox="0 0 10 6"><path d="M0 0 L10 0 L5 6 Z" fill="#222"/></svg>
<div class="t" style="left:826px;top:769.09px;font-size:15.6px;color:#111;font-weight:bold;">Informationen</div>
<div class="t" style="left:984px;top:768.02px;font-size:16.4px;color:#444;font-weight:normal;">Status</div>
<div class="t" style="left:1085.3px;top:768.02px;font-size:16.4px;color:#444;font-weight:normal;">Vorhersage</div>
<div class="a" style="left:746px;top:797px;width:1227px;height:2px;background:#c4c4c4"></div>
<div class="a" style="left:1960.5px;top:801px;width:11px;height:302px;background:#cbcbcb;border-radius:6px"></div>
<div class="t" style="left:751px;top:806.96px;font-size:18px;color:#1a1a1a;font-weight:normal;">Hersteller:</div>
<div class="t" style="left:1073.5px;top:806.96px;font-size:18px;color:#333;font-weight:normal;">Seagate</div>
<div class="t" style="left:1290.8px;top:806.96px;font-size:18px;color:#1a1a1a;font-weight:normal;">Modell:</div>
<div class="t" style="left:1613.2px;top:806.96px;font-size:18px;color:#333;font-weight:normal;">ST4000VN006-3CW104</div>
<div class="t" style="left:751px;top:851.96px;font-size:18px;color:#1a1a1a;font-weight:normal;">Datenträgerkapazität:</div>
<div class="t" style="left:1073.5px;top:851.96px;font-size:18px;color:#333;font-weight:normal;">3.64 TB (4 TB)</div>
<div class="t" style="left:1290.8px;top:851.96px;font-size:18px;color:#1a1a1a;font-weight:normal;">Bustyp:</div>
<div class="t" style="left:1613.2px;top:851.96px;font-size:18px;color:#333;font-weight:normal;">SATA</div>
<div class="t" style="left:751px;top:896.96px;font-size:18px;color:#1a1a1a;font-weight:normal;">Status:</div>
<div class="t" style="left:1073.5px;top:896.96px;font-size:18px;color:#333;font-weight:normal;">Bereit</div>
<div class="t" style="left:1290.8px;top:896.96px;font-size:18px;color:#1a1a1a;font-weight:normal;">Modus:</div>
<div class="t" style="left:1613.2px;top:896.96px;font-size:18px;color:#333;font-weight:normal;">Aktiv (Spinning)</div>
<div class="t" style="left:751px;top:941.96px;font-size:18px;color:#1a1a1a;font-weight:normal;">Aktuelle Geschwindigkeit:</div>
<div class="t" style="left:1073.5px;top:941.96px;font-size:18px;color:#333;font-weight:normal;">6 Gbps</div>
<div class="t" style="left:1290.8px;top:941.96px;font-size:18px;color:#1a1a1a;font-weight:normal;">Max. Geschwindigkeit:</div>
<div class="t" style="left:1613.2px;top:941.96px;font-size:18px;color:#333;font-weight:normal;">6 Gbps</div>
<div class="t" style="left:751px;top:986.96px;font-size:18px;color:#1a1a1a;font-weight:normal;">Temperatur:</div>
<div class="t" style="left:1073.5px;top:986.96px;font-size:18px;color:#333;font-weight:normal;"><span style="color:#6aab35">31°C / 87°F</span></div>
<div class="t" style="left:1290.8px;top:986.96px;font-size:18px;color:#1a1a1a;font-weight:normal;">Datenträgerzugriffsverlauf (I/O):</div>
<div class="t" style="left:1613.2px;top:986.96px;font-size:18px;color:#333;font-weight:normal;"><span style="color:#6aab35">Gut</span></div>
<div class="t" style="left:751px;top:1031.96px;font-size:18px;color:#1a1a1a;font-weight:normal;">Seriennummer:</div>
<div class="t" style="left:1073.5px;top:1031.96px;font-size:18px;color:#333;font-weight:normal;">WW66LH7F</div>
<div class="t" style="left:1290.8px;top:1031.96px;font-size:18px;color:#1a1a1a;font-weight:normal;">ATA-Version:</div>
<div class="t" style="left:1613.2px;top:1031.96px;font-size:18px;color:#333;font-weight:normal;">3</div>
<div class="t" style="left:751px;top:1076.96px;font-size:18px;color:#1a1a1a;font-weight:normal;">ATA-Standard:</div>
<div class="t" style="left:1073.5px;top:1076.96px;font-size:18px;color:#333;font-weight:normal;">109</div>
<div class="t" style="left:1290.8px;top:1076.96px;font-size:18px;color:#1a1a1a;font-weight:normal;">Firmware-Version:</div>
<div class="t" style="left:1613.2px;top:1076.96px;font-size:18px;color:#333;font-weight:normal;">SC60</div>
<svg style="left:1202px;top:854px" width="24" height="24" viewBox="0 0 24 24"><circle cx="12" cy="12" r="12" fill="#03aafc"/><rect x="10.2" y="4.4" width="3.6" height="3.4" rx="0.8" fill="#fff"/><rect x="10.2" y="9.3" width="3.6" height="10" rx="0.4" fill="#fff"/></svg>
</body></html>
